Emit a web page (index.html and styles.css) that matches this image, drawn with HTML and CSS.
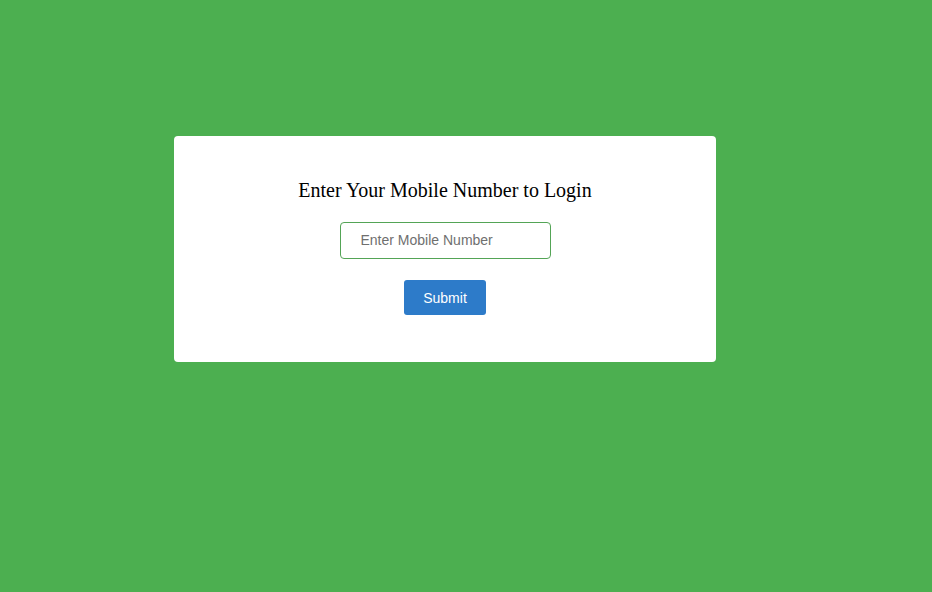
FILE: index.html
```html
<!DOCTYPE html>
<html lang="en">
<head>
<meta charset="utf-8">
<title>Login</title>
<link rel="stylesheet" href="styles.css">
</head>
<body>
<div class="page">
  <div class="card">
    <h2 class="title">Enter Your Mobile Number to Login</h2>
    <input class="mobile" type="text" placeholder="Enter Mobile Number">
    <button class="submit" type="button">Submit</button>
  </div>
</div>
</body>
</html>
```

FILE: styles.css
```css
html, body {
  margin: 0;
  padding: 0;
  background: #4caf50;
}
.page {
  padding: 136px 0 0 174px;
  height: 592px;
  box-sizing: border-box;
}
.card {
  width: 542px;
  height: 226px;
  box-sizing: border-box;
  background: #ffffff;
  border-radius: 4px;
  padding-top: 43px;
  display: flex;
  flex-direction: column;
  align-items: center;
}
.title {
  margin: 0;
  font-family: "Liberation Serif", "Times New Roman", serif;
  font-size: 20px;
  font-weight: normal;
  line-height: 23px;
  color: #000;
}
.mobile {
  margin-top: 20px;
  width: 211px;
  height: 37px;
  box-sizing: border-box;
  border: 1px solid #54a456;
  border-radius: 4px;
  padding: 0 20px 1px;
  font-family: "Liberation Sans", Arial, sans-serif;
  font-size: 14px;
  color: #333;
  outline: none;
}
.mobile::placeholder {
  color: #6f6f6f;
}
.submit {
  margin-top: 21px;
  width: 82px;
  height: 35px;
  box-sizing: border-box;
  border: none;
  border-radius: 3px;
  background: #2d7bc9;
  color: #fff;
  font-family: "Liberation Sans", Arial, sans-serif;
  font-size: 14px;
  padding: 0;
}
```
